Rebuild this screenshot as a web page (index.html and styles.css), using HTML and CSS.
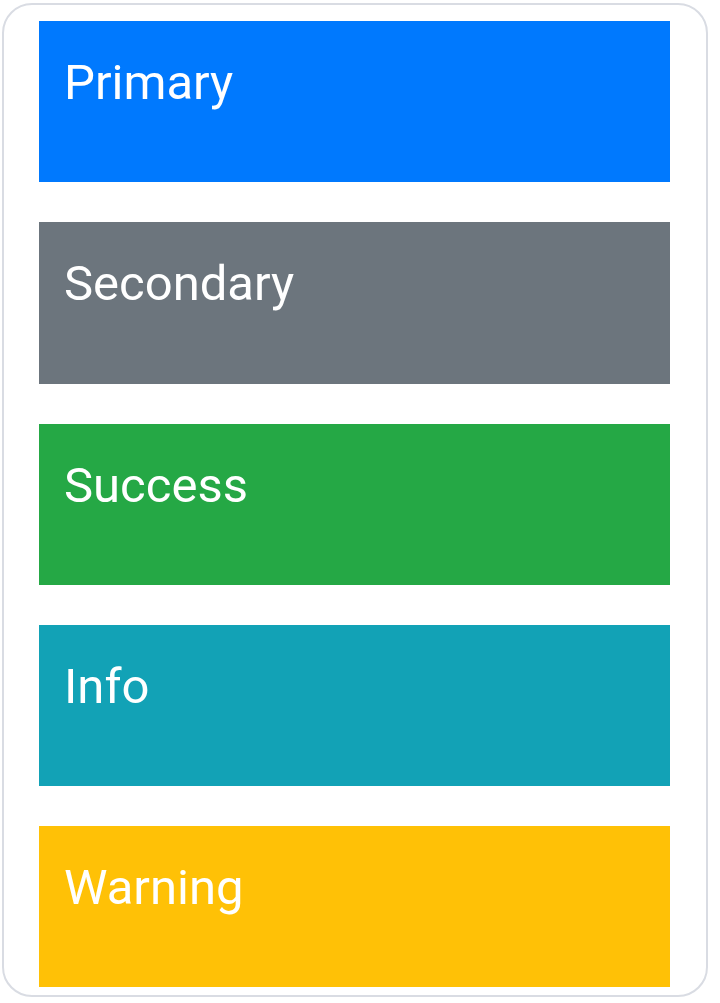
FILE: index.html
```html
<!DOCTYPE html>
<html lang="en">
<head>
  <meta charset="UTF-8">
  <meta name="viewport" content="width=device-width, initial-scale=1.0">
  <title>Alerts</title>
  <link rel="stylesheet" href="styles.css">
</head>
<body>
  <div class="card">
    <div class="box box-primary">Primary</div>
    <div class="box box-secondary">Secondary</div>
    <div class="box box-success">Success</div>
    <div class="box box-info">Info</div>
    <div class="box box-warning">Warning</div>
  </div>
</body>
</html>
```

FILE: styles.css
```css
body {
  margin: 0;
  background-color: #fff;
  font-family: Roboto, 'Noto Sans', sans-serif;
}

.card {
  margin: 3px 0 0 2px;
  width: 706px;
  height: 994px;
  box-sizing: border-box;
  border: 2px solid #d9dce3;
  border-radius: 30px;
  padding: 16px 36px 0 35px;
  display: flex;
  flex-direction: column;
  gap: 40px;
}

.box {
  height: 161.25px;
  box-sizing: border-box;
  padding: 37px 25px;
  color: #fff;
  font-size: 49px;
  line-height: 1;
  flex-shrink: 0;
}

.box-primary {
  background-color: #0079fe;
}

.box-secondary {
  background-color: #6c757d;
}

.box-success {
  background-color: #25a845;
}

.box-info {
  background-color: #12a2b6;
}

.box-warning {
  background-color: #ffc106;
}
```
